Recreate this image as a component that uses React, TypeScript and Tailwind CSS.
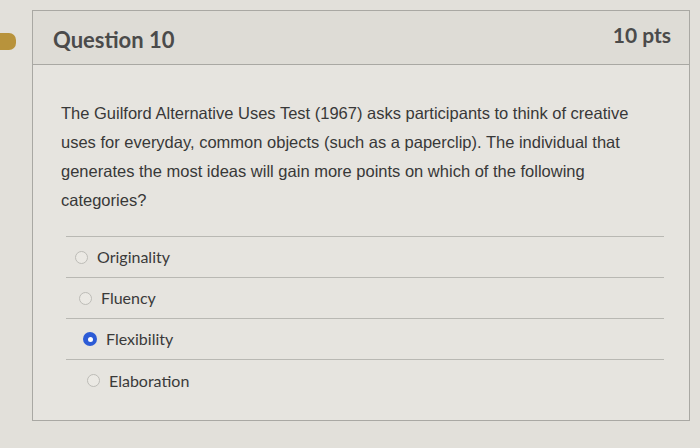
import React from "react";

const options = [
  { label: "Originality", selected: false },
  { label: "Fluency", selected: false },
  { label: "Flexibility", selected: true },
  { label: "Elaboration", selected: false },
];

function Radio({ selected }: { selected: boolean }) {
  if (selected) {
    return (
      <span className="flex h-[14px] w-[14px] items-center justify-center rounded-full bg-[#2c5bd6]">
        <span className="h-[5px] w-[5px] rounded-full bg-white" />
      </span>
    );
  }
  return <span className="h-[13px] w-[13px] rounded-full border border-[#bdbcb7] bg-[#ebe9e4]" />;
}

export default function App() {
  return (
    <div className="relative h-[448px] w-[700px] overflow-hidden bg-[#e2e0da] pl-[32px] pt-[10px]">
      <div className="absolute left-0 top-[33px] h-[17px] w-[16px] rounded-r-[7px] bg-[#b8933c]" />
      <div className="w-[658px] border border-[#a9a8a3] bg-[#e6e4df]">
        <div
          className="flex h-[54px] items-center justify-between border-b border-[#a9a8a3] bg-[#dedcd6] pl-[20px] pr-[18px] text-[22px] font-bold text-[#4b4b4b]"
          style={{ fontFamily: "Lato, 'Open Sans', sans-serif" }}
        >
          <span className="mt-[4px]">Question 10</span>
          <span className="-mt-[6px] text-[21px]">10 pts</span>
        </div>
        <div className="pb-[19px] pt-[34px]">
          <p
            className="pl-[28px] pr-[10px] text-[16.5px] leading-[29px] text-[#383838]"
            style={{ fontFamily: "'Liberation Sans', Arial, sans-serif" }}
          >
            The Guilford Alternative Uses Test (1967) asks participants to think of creative
            <br />
            uses for everyday, common objects (such as a paperclip). The individual that
            <br />
            generates the most ideas will gain more points on which of the following
            <br />
            categories?
          </p>
          <div className="ml-[33px] mr-[25px] mt-[21px] border-t border-[#b9b8b3]">
            {options.map((o, i) => (
              <div
                key={o.label}
                className={`flex h-[41px] items-center gap-[9px] ${
                  i < options.length - 1 ? "border-b border-[#b9b8b3]" : ""
                }`}
                style={{ paddingLeft: 9 + i * 4 }}
              >
                <Radio selected={o.selected} />
                <span
                  className="text-[16px] text-[#3a3a3a]"
                  style={{ fontFamily: "Lato, 'Open Sans', sans-serif" }}
                >
                  {o.label}
                </span>
              </div>
            ))}
          </div>
        </div>
      </div>
    </div>
  );
}
